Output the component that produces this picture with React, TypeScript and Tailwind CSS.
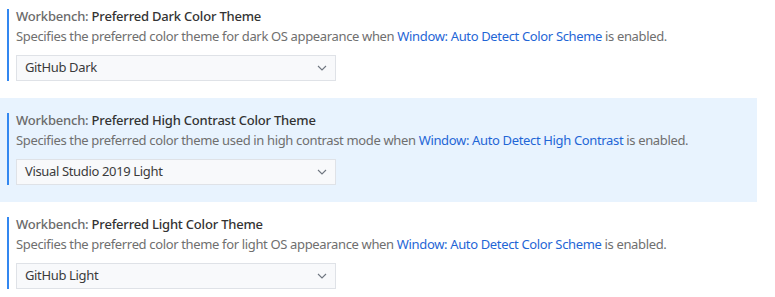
import { useState } from "react";

type Setting = {
  title: string;
  desc: string;
  link: string;
  value: string;
};

const settings: Setting[] = [
  {
    title: "Preferred Dark Color Theme",
    desc: "Specifies the preferred color theme for dark OS appearance when",
    link: "Window: Auto Detect Color Scheme",
    value: "GitHub Dark",
  },
  {
    title: "Preferred High Contrast Color Theme",
    desc: "Specifies the preferred color theme used in high contrast mode when",
    link: "Window: Auto Detect High Contrast",
    value: "Visual Studio 2019 Light",
  },
  {
    title: "Preferred Light Color Theme",
    desc: "Specifies the preferred color theme for light OS appearance when",
    link: "Window: Auto Detect Color Scheme",
    value: "GitHub Light",
  },
];

const Chevron = () => (
  <svg width="10" height="6" viewBox="0 0 10 6" fill="none">
    <path d="M1 1l4 4 4-4" stroke="#6f7680" strokeWidth="1.1" />
  </svg>
);

const SettingRow = ({ s, focused }: { s: Setting; focused: boolean }) => (
  <div className={`h-[104px] w-[757px] pl-[7px] pt-[15px] ${focused ? "bg-[#e8f3fe]" : ""}`}>
    <div className="flex">
      <div className="w-[2px] bg-[#3287f0]" />
      <div className="pl-[7px] tracking-[-0.35px]">
        <div className="h-[16px] leading-[14px] text-[13px] font-medium tracking-[-0.2px]">
          <span className="text-[#6b6b6b]">Workbench: </span>
          <span className="text-[#333333]">{s.title}</span>
        </div>
        <div className="h-[22px] leading-[22px] text-[13px] text-[#6f6f6f] whitespace-nowrap">
          {s.desc} <span className="text-[#1f66d6]">{s.link}</span> is enabled.
        </div>
        <div className="mt-[8px] flex h-[26px] w-[320px] items-center justify-between border border-[#dfe2e7] bg-[#f8f9fb] pl-[8px] pr-[8px] text-[13px] text-[#3b3b3b]">
          <span>{s.value}</span>
          <Chevron />
        </div>
      </div>
    </div>
  </div>
);

export default function App() {
  const [focus] = useState(1);
  return (
    <div className="h-[297px] w-[775px] overflow-hidden bg-white font-['Noto_Sans','Open_Sans',sans-serif]">
      <div className="-mt-[6px]">
        {settings.map((s, i) => (
          <SettingRow key={i} s={s} focused={i === focus} />
        ))}
      </div>
    </div>
  );
}
